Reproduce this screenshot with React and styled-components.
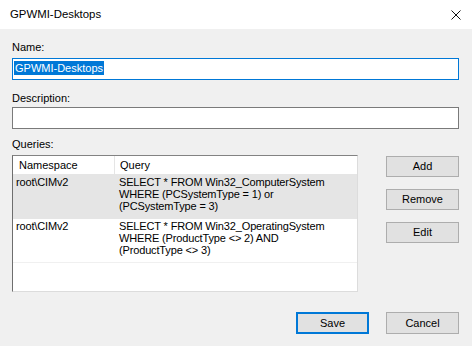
import React from "react";
import styled, { createGlobalStyle } from "styled-components";

const Global = createGlobalStyle`
  html, body { margin: 0; padding: 0; background: #f0f0f0; }
  body { font-family: "Liberation Sans", Arial, sans-serif; font-size: 11px; color: #000; }
  * { box-sizing: border-box; }
`;

const Window = styled.div`
  width: 472px;
  height: 346px;
  background: #f0f0f0;
  display: flex;
  flex-direction: column;
  overflow: hidden;
`;

const TitleBar = styled.div`
  height: 29px;
  flex: none;
  background: #fff;
  display: flex;
  align-items: center;
  justify-content: space-between;
  padding: 0 11px 0 10px;
`;

const Title = styled.span`
  font-size: 11.4px;
  color: #000;
  line-height: 13px;
`;

const CloseIcon = styled.svg`
  width: 10px;
  height: 10px;
  display: block;
`;

const Body = styled.div`
  flex: 1;
  display: flex;
  flex-direction: column;
  padding: 12px 13px 0 12px;
`;

const Label = styled.div`
  line-height: 13px;
  height: 13px;
  margin-bottom: ${(p) => p.$gap}px;
`;

const TextBox = styled.div`
  height: 22px;
  background: #fff;
  border: 1px solid ${(p) => (p.$focused ? "#0078d7" : "#7a7a7a")};
  padding: 2px 1px;
  line-height: 14px;
  margin-bottom: ${(p) => p.$gap}px;
`;

const Selected = styled.span`
  background: #0078d7;
  color: #fff;
  padding: 0 1px;
  display: inline-block;
  line-height: 14px;
`;

const MainRow = styled.div`
  display: flex;
  gap: 28px;
  align-items: flex-start;
`;

const List = styled.div`
  width: 346px;
  height: 137px;
  background: #fff;
  border-top: 1px solid #828282;
  border-left: 1px solid #6e6e6e;
  border-right: 1px solid #dcdcdc;
  border-bottom: 1px solid #dcdcdc;
  display: flex;
  flex-direction: column;
`;

const Columns = styled.div`
  display: grid;
  grid-template-columns: 102px 1fr;
`;

const Header = styled(Columns)`
  height: 19px;
  border-bottom: 1px solid #e5e5e5;
`;

const HeaderCell = styled.div`
  line-height: 13px;
  padding: 3px 0 0 ${(p) => p.$pad}px;
  border-right: ${(p) => (p.$divider ? "1px solid #e5e5e5" : "none")};
`;

const Row = styled(Columns)`
  height: 44px;
  background: ${(p) => (p.$selected ? "#e5e5e5" : "#fff")};
  border-bottom: ${(p) => (p.$last ? "1px solid #f0f0f0" : "none")};
`;

const Cell = styled.div`
  line-height: 12px;
  padding: 1px 0 0 ${(p) => p.$pad}px;
  white-space: nowrap;
  letter-spacing: -0.15px;
`;

const ButtonCol = styled.div`
  display: flex;
  flex-direction: column;
  gap: 12px;
  padding-top: 1px;
`;

const Button = styled.button`
  width: 73px;
  height: 21px;
  background: #e1e1e1;
  border: ${(p) => (p.$default ? "2px solid #0078d7" : "1px solid #adadad")};
  font-family: "Liberation Sans", Arial, sans-serif;
  font-size: 11px;
  color: #000;
  padding: 0;
  line-height: 13px;
`;

const Footer = styled.div`
  display: flex;
  justify-content: flex-end;
  gap: 17px;
  margin-top: 20px;
`;

const FooterButton = styled(Button)`
  height: 22px;
`;

const queries = [
  {
    ns: "root\\CIMv2",
    lines: [
      "SELECT * FROM Win32_ComputerSystem",
      "WHERE (PCSystemType = 1) or",
      "(PCSystemType = 3)",
    ],
    selected: true,
  },
  {
    ns: "root\\CIMv2",
    lines: [
      "SELECT * FROM Win32_OperatingSystem",
      "WHERE (ProductType <> 2) AND",
      "(ProductType <> 3)",
    ],
  },
];

export default function App() {
  return (
    <>
      <Global />
      <Window>
        <TitleBar>
          <Title>GPWMI-Desktops</Title>
          <CloseIcon viewBox="0 0 10 10">
            <path d="M0.5 0.5 L9.5 9.5 M9.5 0.5 L0.5 9.5" stroke="#111" strokeWidth="1" fill="none" />
          </CloseIcon>
        </TitleBar>
        <Body>
          <Label $gap={4}>Name:</Label>
          <TextBox $focused $gap={12}>
            <Selected>GPWMI-Desktops</Selected>
          </TextBox>
          <Label $gap={2}>Description:</Label>
          <TextBox $gap={9} />
          <Label $gap={4}>Queries:</Label>
          <MainRow>
            <List>
              <Header>
                <HeaderCell $pad={6} $divider>Namespace</HeaderCell>
                <HeaderCell $pad={5}>Query</HeaderCell>
              </Header>
              {queries.map((q, i) => (
                <Row key={i} $selected={q.selected} $last={i === queries.length - 1}>
                  <Cell $pad={3}>{q.ns}</Cell>
                  <Cell $pad={4}>
                    {q.lines.map((l, j) => (
                      <div key={j}>{l}</div>
                    ))}
                  </Cell>
                </Row>
              ))}
            </List>
            <ButtonCol>
              <Button>Add</Button>
              <Button>Remove</Button>
              <Button>Edit</Button>
            </ButtonCol>
          </MainRow>
          <Footer>
            <FooterButton $default>Save</FooterButton>
            <FooterButton>Cancel</FooterButton>
          </Footer>
        </Body>
      </Window>
    </>
  );
}
